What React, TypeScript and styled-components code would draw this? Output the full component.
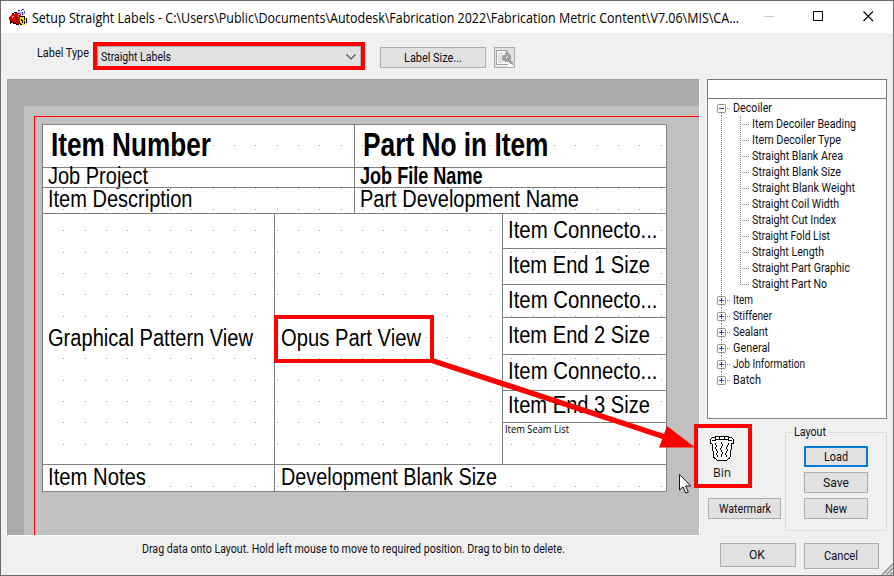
import React, { useLayoutEffect, useRef, useState } from "react";
import styled, { createGlobalStyle, css } from "styled-components";

const Global = createGlobalStyle`
  * { box-sizing: border-box; }
  html, body { margin: 0; padding: 0; overflow: hidden; background: #f0f0f0; }
  body { font: 12px/16px Roboto, sans-serif; color: #101018; }
`;

/* Text condensed or widened to an exact advance width */
const FitBox = styled.span<{ $w: number }>`
  display: block;
  flex: none;
  width: ${(p) => p.$w}px;
  white-space: nowrap;
`;
const FitInner = styled.span`
  display: inline-block;
  vertical-align: top;
  transform-origin: 0 50%;
`;
function Fit({ w, children }: { w: number; children: string }) {
  const ref = useRef<HTMLSpanElement>(null);
  const [scale, setScale] = useState(1);
  useLayoutEffect(() => {
    if (ref.current) setScale(w / parseFloat(getComputedStyle(ref.current).width));
  }, [w]);
  return (
    <FitBox $w={w}>
      <FitInner ref={ref} style={{ transform: `scaleX(${scale})` }}>{children}</FitInner>
    </FitBox>
  );
}

const Window = styled.div`
  position: relative;
  width: 894px;
  height: 576px;
  border: 1px solid #6d6b6d;
  background: #f0f0f0;
  display: flex;
  flex-direction: column;
  overflow: hidden;
`;
const TitleBar = styled.header`
  height: 32px;
  flex: none;
  background: #fff;
  display: flex;
  align-items: center;
  padding-left: 8px;
  color: #000;
  font: 14px/20px "Open Sans", sans-serif;
`;
const TitleText = styled.div`
  margin-left: 5px;
  padding-top: 1px;
`;
const Controls = styled.div`
  margin-left: auto;
  margin-right: 19px;
  margin-bottom: 1px;
  display: flex;
  gap: 38px;
  svg { display: block; }
`;
const Toolbar = styled.div`
  height: 46px;
  flex: none;
  display: flex;
  align-items: flex-start;
  padding-left: 36px;
`;
const ToolLabel = styled.div`
  padding-top: 12px;
  width: 56px;
`;
const ComboFrame = styled.div`
  width: 272px;
  height: 28px;
  margin-top: 9px;
  border: 4px solid #f00;
`;
const Combo = styled.div`
  height: 20px;
  border: 1px solid #adadad;
  border-bottom: 0;
  background: #e1e1e1;
  display: flex;
  align-items: center;
  justify-content: space-between;
  padding: 1px 4px 0 3px;
`;
const Button = styled.button<{ $w: number; $h?: number; $primary?: boolean }>`
  appearance: none;
  width: ${(p) => p.$w}px;
  height: ${(p) => p.$h ?? 21}px;
  flex: none;
  padding: ${(p) => (p.$h ? "0 2px 1px 0" : "1px 0 0")};
  border: ${(p) => (p.$primary ? "2px solid #0078d7" : "1px solid #adadad")};
  background: #e1e1e1;
  color: inherit;
  font: inherit;
  display: flex;
  align-items: center;
  justify-content: center;
`;
const SizeButtons = styled.div`
  display: flex;
  gap: 8px;
  margin: 14px 0 0 15px;
`;

const Body = styled.div`
  flex: 1;
  display: flex;
  padding-left: 6px;
  min-height: 0;
`;
const Left = styled.main`
  width: 693px;
  flex: none;
`;
const Canvas = styled.div`
  height: 457px;
  border: 1px solid #a0a0a0;
  border-right-color: #fff;
  border-bottom-color: #fff;
  background: #ababab;
  padding: 26px 0 0 16px;
  overflow: hidden;
`;
const Paper = styled.div`
  height: 100%;
  background: #c0c0c0;
  padding: 10px 0 0 10px;
`;
const Margin = styled.div`
  height: 100%;
  border: 1px solid #f00;
  border-right: 0;
  border-bottom: 0;
  padding: 7px 0 0 7px;
`;
const Hint = styled.div`
  padding: 5px 0 0 135px;
`;

const Sheet = styled.div`
  position: relative;
  width: 625px;
  height: 368px;
  background: #fff;
  border-right: 1px solid #808080;
  border-bottom: 1px solid #808080;
  color: #000;
`;
const Dots = styled.svg`
  position: absolute;
  inset: 0;
`;
const SheetRow = styled.div<{ $h: number }>`
  position: relative;
  display: flex;
  height: ${(p) => p.$h}px;
`;
const Stack = styled.div<{ $w: number }>`
  width: ${(p) => p.$w}px;
`;
type Kind = "normal" | "inset" | "title" | "bold" | "tiny";
const kinds = {
  normal: css`font-size: 23.5px; padding-left: 5px;`,
  inset: css`font-size: 23.5px; padding-left: 6px;`,
  bold: css`font-size: 23px; font-weight: 700; padding-left: 4.5px;`,
  title: css`font-size: 34px; font-weight: 700; padding: 0 0 5px 7.5px;`,
  tiny: css`font: 10px/12px "Open Sans", sans-serif; padding-left: 2px; align-items: flex-start;`,
};
const Cell = styled.div<{ $w: number; $h: number; $kind: Kind }>`
  width: ${(p) => p.$w}px;
  height: ${(p) => p.$h}px;
  border-top: 1px solid #808080;
  border-left: 1px solid #808080;
  padding-bottom: 3px;
  display: flex;
  align-items: center;
  font-family: "Liberation Sans", Arial, sans-serif;
  line-height: 20px;
  ${(p) => kinds[p.$kind]}
`;
function Field({ w, h, tw, kind = "normal", children }: { w: number; h: number; tw: number; kind?: Kind; children: string }) {
  return <Cell $w={w} $h={h} $kind={kind}><Fit w={tw}>{children}</Fit></Cell>;
}

const Side = styled.aside`
  width: 180px;
  margin-left: 7px;
  display: flex;
  flex-direction: column;
`;
const Search = styled.input`
  display: block;
  width: 180px;
  height: 19px;
  flex: none;
  border: 1px solid #7a7a7a;
  border-bottom: 0;
  background: #fff;
  padding: 0 4px;
  outline: none;
`;
const Tree = styled.div`
  height: 321px;
  flex: none;
  border: 1px solid #828790;
  border-top-color: #7a7a7a;
  background: #fff;
  padding: 1px 0 0 9px;
`;
const TreeRow = styled.div`
  display: flex;
  height: 16px;
  svg { flex: none; display: block; }
`;
const Actions = styled.div`
  display: flex;
  justify-content: space-between;
  height: 112px;
  flex: none;
  padding-top: 5px;
`;
const BinColumn = styled.div`
  display: flex;
  flex-direction: column;
  gap: 10px;
  padding-left: 1px;
`;
const BinFrame = styled.div`
  width: 58px;
  height: 64px;
  margin-left: -14px;
  border: 4px solid #f00;
  background: #f0f0f0;
  display: flex;
  flex-direction: column;
  align-items: center;
  padding: 7px 2px 0 0;
  gap: 4px;
  font-family: "Open Sans", sans-serif;
  svg { display: block; }
`;
const Group = styled.fieldset`
  width: 102px;
  height: 107px;
  margin: 0;
  border: 1px solid #dcdcdc;
  padding: 6px 0 0 18px;
  min-width: 0;
  display: flex;
  flex-direction: column;
  gap: 5px;
`;
const Legend = styled.legend`
  margin-left: -12px;
  padding: 0 2px;
`;
const DialogButtons = styled.div`
  display: flex;
  gap: 8px;
  margin: 12px 0 0 13px;
`;
const Overlay = styled.svg`
  position: absolute;
  left: -1px;
  top: -1px;
  pointer-events: none;
`;

const dots: [number, number][] = [];
for (let r = 0; r < 17; r++) {
  const y = Math.floor(145.34 + (r * 64) / 3) - 124;
  if (r === 1 || r === 15) continue;
  for (let c = 0; c < 29; c++) dots.push([Math.floor(63.67 + (c * 64) / 3) - 42, y]);
}

const children: [string, number][] = [
  ["Item Decoiler Beading", 104], ["Item Decoiler Type", 89], ["Straight Blank Area", 91],
  ["Straight Blank Size", 89], ["Straight Blank Weight", 103], ["Straight Coil Width", 87],
  ["Straight Cut Index", 84], ["Straight Fold List", 78], ["Straight Length", 72],
  ["Straight Part Graphic", 98], ["Straight Part No", 75],
];
const roots: [string, number][] = [
  ["Item", 20], ["Stiffener", 39], ["Sealant", 35], ["General", 37], ["Job Information", 72], ["Batch", 28],
];

const dotted = { stroke: "#808080", strokeDasharray: "1 1" };

function Expander({ open, first, last }: { open?: boolean; first?: boolean; last?: boolean }) {
  return (
    <svg width="16" height="16">
      {!first && <path d="M4.5 0V4" {...dotted} />}
      {!last && <path d="M4.5 13V16" {...dotted} />}
      <path d="M10 8.5H13" {...dotted} />
      <rect x=".5" y="4.5" width="8" height="8" rx="1" fill="#f6f6f6" stroke="#919191" />
      <path d="M2 8.5H7" stroke="#2f4fa0" />
      {!open && <path d="M4.5 6V11" stroke="#2f4fa0" />}
    </svg>
  );
}
function Branch({ last }: { last: boolean }) {
  return (
    <svg width="35" height="16">
      <path d="M4.5 0V16" {...dotted} />
      <path d={last ? "M23.5 0V9" : "M23.5 0V16"} {...dotted} />
      <path d="M25 8.5H32" {...dotted} />
    </svg>
  );
}
const BugIcon = () => (
  <svg width="18" height="17" shapeRendering="crispEdges">
    <path d="M2 6h1V5h3V4h3v1h3v2h2v7h-2v1H7v-1H4v-1H1v-2H0V8h1V7h1z" fill="#d80000" />
    <path d="M8 7h1v6h1v1H8v-1H7V8h1zM12 9h1v4h-1z" fill="#800000" />
    <path d="M3 7h2v1H4v1H3zM9 7h1v1H9z" fill="#ff8c8c" />
    <path d="M1 11h1v1h1v1h2v1h2v1h3v1H7v-1H4v-1H2v-1H1zM5 3h4v1H5zM3 4h2v1H3zM1 13h1v2H1z" fill="#200000" />
    <path d="M8 3h1V2h3v1h1v2h-2v1H9V4H8zM14 3h2v3h-2z" fill="#b4c4f8" />
    <path d="M12 1h1V0h2v1h-2v1h-1zM9 1h2v1H9zM15 2h1v2h-1zM9 4h2v1H9zM13 3h1v3h-1z" fill="#2838a0" />
    <path d="M11 8h5v1h1v5h-1v2h-4v-1h-1z" fill="#f0e000" />
    <path d="M12 10h1v1h1v3h-1v-2h-1zM15 8h1v3h-1zM15 12h1v3h-1zM17 9h1v5h-1zM11 7h5v1h-5zM11 14h1v1h1v1h-2z" fill="#000" />
  </svg>
);
const PreviewIcon = () => (
  <svg width="19" height="19" shapeRendering="crispEdges">
    <path d="M2 2H12V4H14V7H16V14H18V18H13V17H2Z" fill="#fff" />
    <path d="M1 1H12V2H2V15H13V16H1Z" fill="#a0a0a0" />
    <path d="M3 3H8V14H3Z" fill="#e1e1e1" />
    <path d="M11 2h2v2h1v1h1v1h1v6h1v1h1v3h-1v-1h-2v-1h-1v-1h-4v-1H8v-1H7V7h1V6h2V4h1z" fill="#a0a0a0" />
    <path d="M12 7h1v1h-1zM11 8h1v1h-1z" fill="#fff" />
  </svg>
);
const BinIcon = () => (
  <svg width="26" height="26" shapeRendering="crispEdges">
    <path d="M1.500 4.500L2 8.500H3L5 22.500L8 25H18L21 22.500L23 8.500H24.500V4.500L22.500 2.500H19.500V1.500H6.500V2.500H3.500Z" fill="#fff" stroke="#000" />
    <path d="M3 5.500H7M19 5.500H23M7 4.500H19M6.500 1V5M10.500 1V4M15.500 1V4M19.500 1V5" stroke="#000" fill="none" />
    <path d="M6 8h1v2h1v2H7v2h1v2h1v2H8v2h1v2H8v-2H7v-2h1v-2H7v-2H6v-2h1v-2H6zM12 7h1v2h1v2h-1v2h-1v2h1v2h1v2h-1v3h-1v-3h1v-2h-1v-2h-1v-2h1v-2h1V9h-1zM19 8h1v2h-1v2h-1v2h1v2h-1v2h-1v2h1v2h-1v-2h-1v-2h1v-2h1v-2h-1v-2h1v-2h1z" fill="#000" />
  </svg>
);

export default function App() {
  return (
    <>
      <Global />
      <Window>
        <TitleBar>
          <BugIcon />
          <TitleText>
            <Fit w={707}>{"Setup Straight Labels - C:\\Users\\Public\\Documents\\Autodesk\\Fabrication 2022\\Fabrication Metric Content\\V7.06\\MIS\\CA..."}</Fit>
          </TitleText>
          <Controls>
            <svg width="11" height="11"><path d="M0 5.500H10" stroke="#ccc" /></svg>
            <svg width="12" height="11"><path d="M.5 .5H9.500V9.500H.5Z" fill="none" stroke="#000" /></svg>
            <svg width="11" height="11"><path d="M.5 .5L10 10M10 .5L.5 10" stroke="#000" strokeWidth="1.100" /></svg>
          </Controls>
        </TitleBar>
        <Toolbar>
          <ToolLabel><Fit w={52}>Label Type</Fit></ToolLabel>
          <ComboFrame>
            <Combo>
              <Fit w={70}>Straight Labels</Fit>
              <svg width="10" height="6"><path d="M.5 .5L5 5L9.500 .5" fill="none" stroke="#505050" strokeWidth="1.100" /></svg>
            </Combo>
          </ComboFrame>
          <SizeButtons>
            <Button $w={106}><Fit w={58}>Label Size...</Fit></Button>
            <Button $w={21}><PreviewIcon /></Button>
          </SizeButtons>
        </Toolbar>
        <Body>
          <Left>
            <Canvas>
              <Paper>
                <Margin>
                  <Sheet>
                    <Dots width="624" height="367">
                      {dots.map(([x, y]) => <rect key={`${x}-${y}`} x={x} y={y} width="1" height="1" fill="#a0a0a0" />)}
                    </Dots>
                    <SheetRow $h={43}>
                      <Field w={312} h={43} tw={160} kind="title">Item Number</Field>
                      <Field w={312} h={43} tw={185.5} kind="title">Part No in Item</Field>
                    </SheetRow>
                    <SheetRow $h={20}>
                      <Field w={312} h={20} tw={100}>Job Project</Field>
                      <Field w={312} h={20} tw={122.5} kind="bold">Job File Name</Field>
                    </SheetRow>
                    <SheetRow $h={26}>
                      <Field w={312} h={26} tw={144.5}>Item Description</Field>
                      <Field w={312} h={26} tw={219}>Part Development Name</Field>
                    </SheetRow>
                    <SheetRow $h={251}>
                      <Field w={232} h={251} tw={205}>Graphical Pattern View</Field>
                      <Field w={228} h={251} tw={140} kind="inset">Opus Part View</Field>
                      <Stack $w={164}>
                        <Field w={164} h={35} tw={149.5}>Item Connecto...</Field>
                        <Field w={164} h={36} tw={142}>Item End 1 Size</Field>
                        <Field w={164} h={33} tw={149.5}>Item Connecto...</Field>
                        <Field w={164} h={37} tw={142}>Item End 2 Size</Field>
                        <Field w={164} h={36} tw={149.5}>Item Connecto...</Field>
                        <Field w={164} h={32} tw={142}>Item End 3 Size</Field>
                        <Field w={164} h={42} tw={64} kind="tiny">Item Seam List</Field>
                      </Stack>
                    </SheetRow>
                    <SheetRow $h={27}>
                      <Field w={232} h={27} tw={98}>Item Notes</Field>
                      <Field w={392} h={27} tw={216} kind="inset">Development Blank Size</Field>
                    </SheetRow>
                  </Sheet>
                </Margin>
              </Paper>
            </Canvas>
            <Hint><Fit w={423}>Drag data onto Layout. Hold left mouse to move to required position. Drag to bin to delete.</Fit></Hint>
          </Left>
          <Side>
            <Search aria-label="Search" />
            <Tree>
              <TreeRow><Expander open first /><Fit w={39}>Decoiler</Fit></TreeRow>
              {children.map(([t, w], i) => (
                <TreeRow key={t}><Branch last={i === children.length - 1} /><Fit w={w}>{t}</Fit></TreeRow>
              ))}
              {roots.map(([t, w], i) => (
                <TreeRow key={t}><Expander last={i === roots.length - 1} /><Fit w={w}>{t}</Fit></TreeRow>
              ))}
            </Tree>
            <Actions>
              <BinColumn>
                <BinFrame><BinIcon /><Fit w={18}>Bin</Fit></BinFrame>
                <Button $w={73}><Fit w={52}>Watermark</Fit></Button>
              </BinColumn>
              <Group>
                <Legend><Fit w={32}>Layout</Fit></Legend>
                <Button $w={64} $primary><Fit w={24}>Load</Fit></Button>
                <Button $w={64}><Fit w={26}>Save</Fit></Button>
                <Button $w={64}><Fit w={22}>New</Fit></Button>
              </Group>
            </Actions>
            <DialogButtons>
              <Button $w={76} $h={24}><Fit w={16}>OK</Fit></Button>
              <Button $w={75} $h={26}><Fit w={34}>Cancel</Fit></Button>
            </DialogButtons>
          </Side>
        </Body>
        <Overlay width="894" height="576">
          <rect x="276" y="317" width="156" height="44" fill="none" stroke="#f00" strokeWidth="4" />
          <path d="M432 360.500L668 438" stroke="#f00" strokeWidth="5.500" />
          <path d="M667 426L695 447.500L659 447.500Z" fill="#f00" />
          <path d="M679.500 474.500V490L683 486.800L685.800 493L688.300 492L685.600 486H690.800Z" fill="#fff" stroke="#000" strokeWidth=".9" />
          <path d="M882 575L893 564M886 575L893 568M890 575L893 572" stroke="#a0a0a0" strokeWidth="1.800" />
        </Overlay>
      </Window>
    </>
  );
}
